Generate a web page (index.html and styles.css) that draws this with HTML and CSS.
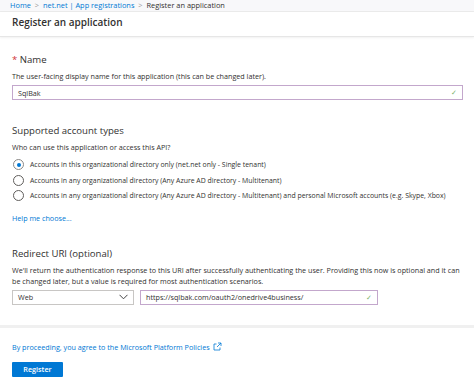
FILE: index.html
```html
<!DOCTYPE html>
<html lang="en">
<head>
    <meta charset="UTF-8">
    <title>Register an application</title>
    <link rel="stylesheet" href="styles.css">
</head>
<body>
    <div class="breadcrumb">
        <a href="#">Home</a> <span class="sep">&gt;</span>
        <a href="#">net.net | App registrations</a> <span class="sep">&gt;</span>
        <span>Register an application</span>
    </div>

    <div class="title-bar">
        <h1>Register an application</h1>
    </div>

    <div class="content">
        <section class="section name-section">
            <h2><span class="req">*</span> Name</h2>
            <p class="desc">The user-facing display name for this application (this can be changed later).</p>
            <div class="input valid full">
                <span>SqlBak</span>
                <span class="check">&#10003;</span>
            </div>
        </section>

        <section class="section">
            <h2>Supported account types</h2>
            <p class="desc">Who can use this application or access this API?</p>
            <div class="radios">
                <label class="radio"><span class="dot checked"></span>Accounts in this organizational directory only (net.net only - Single tenant)</label>
                <label class="radio"><span class="dot"></span>Accounts in any organizational directory (Any Azure AD directory - Multitenant)</label>
                <label class="radio"><span class="dot"></span>Accounts in any organizational directory (Any Azure AD directory - Multitenant) and personal Microsoft accounts (e.g. Skype, Xbox)</label>
            </div>
            <a href="#" class="link help">Help me choose...</a>
        </section>

        <section class="section">
            <h2>Redirect URI (optional)</h2>
            <p class="desc">We'll return the authentication response to this URI after successfully authenticating the user. Providing this now is optional and it can be changed later, but a value is required for most authentication scenarios.</p>
            <div class="uri-row">
                <div class="input select">
                    <span>Web</span>
                    <svg width="9" height="6" viewBox="0 0 9 6"><path d="M0.5 0.8 L4.5 4.8 L8.5 0.8" fill="none" stroke="#444" stroke-width="1"/></svg>
                </div>
                <div class="input valid url">
                    <span>https://sqlbak.com/oauth2/onedrive4business/</span>
                    <span class="check">&#10003;</span>
                </div>
            </div>
        </section>
    </div>

    <div class="footer">
        <p class="policy"><a href="#" class="link">By proceeding, you agree to the Microsoft Platform Policies</a>
            <svg width="9" height="9" viewBox="0 0 9 9"><path d="M3.5 2 H1 V8 H7 V5.5 M5 1 H8 V4 M8 1 L4 5" fill="none" stroke="#0078d4" stroke-width="0.8"/></svg>
        </p>
        <button class="btn">Register</button>
    </div>
</body>
</html>
```

FILE: styles.css
```css
body {
    margin: 0;
    font-family: "Open Sans", "Noto Sans", sans-serif;
    color: #323130;
    background-color: #fff;
    width: 474px;
    height: 382px;
    overflow: hidden;
}

a {
    text-decoration: none;
}

.breadcrumb {
    height: 12px;
    padding-left: 10px;
    background-color: #f8f8fa;
    font-size: 7.4px;
    line-height: 12px;
    color: #323130;
    border-bottom: 1px solid #ebebeb;
    margin-top: -1px;
}

.breadcrumb a {
    color: #0078d4;
}

.breadcrumb .sep {
    color: #999;
    margin: 0 2px;
}

.title-bar {
    height: 24px;
    border-bottom: 1px solid #e6e6e6;
    box-shadow: 0 1px 2px rgba(0, 0, 0, 0.06);
}

h1 {
    margin: 0;
    padding-left: 12px;
    font-size: 10px;
    font-weight: 600;
    line-height: 20px;
}

.content {
    padding: 0 12px;
}

.section {
    margin-top: 24px;
}

.name-section {
    margin-top: 16px;
}

h2 {
    margin: 0;
    font-size: 9.6px;
    font-weight: 400;
    line-height: 14px;
}

.req {
    color: #d13438;
}

.desc {
    margin: 4px 0 0;
    font-size: 7.2px;
    line-height: 11px;
    max-width: 452px;
}

.input {
    box-sizing: border-box;
    height: 15px;
    border: 1px solid #c8c6c4;
    display: flex;
    align-items: center;
    justify-content: space-between;
    padding: 0 5px;
    font-size: 7.2px;
}

.input.valid {
    border-color: #c3a7cc;
}

.full {
    margin-top: 3px;
    width: 451px;
}

.check {
    color: #7cb36b;
    font-size: 7px;
}

.radios {
    margin-top: 6px;
    display: flex;
    flex-direction: column;
    gap: 4px;
}

.radio {
    display: flex;
    align-items: center;
    font-size: 6.9px;
    line-height: 11.5px;
    white-space: nowrap;
}

.dot {
    box-sizing: border-box;
    width: 11px;
    height: 11px;
    border: 1px solid #605e5c;
    border-radius: 50%;
    margin-right: 6px;
    margin-left: 1px;
    display: inline-block;
    position: relative;
    flex-shrink: 0;
}

.dot.checked {
    border-color: #8a8886;
}

.dot.checked::after {
    content: "";
    position: absolute;
    left: 2.5px;
    top: 2.5px;
    width: 4px;
    height: 4px;
    border-radius: 50%;
    background-color: #0078d4;
}

.link {
    color: #0078d4;
}

.help {
    display: block;
    margin: 11px 0 4px;
    font-size: 7.2px;
}

.uri-row {
    display: flex;
    gap: 6px;
    margin-top: 3px;
}

.select {
    width: 122px;
}

.url {
    width: 238px;
}

.footer {
    margin-top: 20px;
    border-top: 3px solid #f0f0f0;
    padding: 0 12px;
}

.policy {
    margin: 14px 0 0;
    font-size: 7.2px;
    display: flex;
    align-items: center;
    gap: 3px;
}

.btn {
    margin-top: 10px;
    width: 51px;
    height: 15px;
    border: none;
    border-radius: 1px;
    background-color: #0078d4;
    color: #fff;
    font-family: inherit;
    font-size: 7.2px;
    font-weight: 600;
    padding: 0;
}
```
